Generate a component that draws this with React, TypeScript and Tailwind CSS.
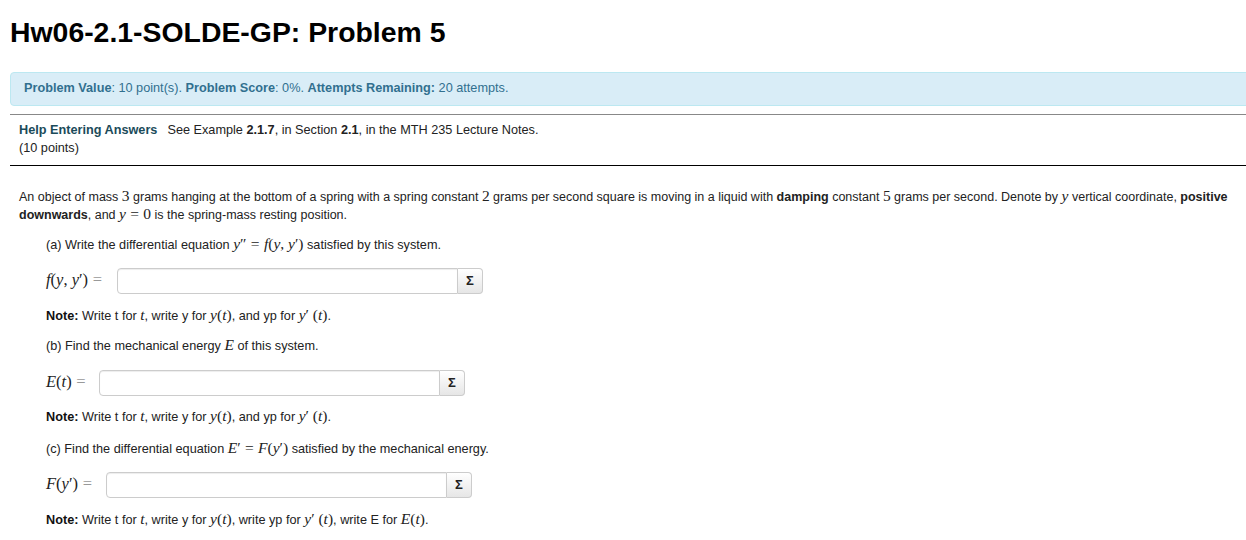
import React from "react";

const MATH = "font-['Liberation_Serif','DejaVu_Serif',serif]";

function M({ children, size = "text-[15.5px]" }: { children: React.ReactNode; size?: string }) {
  return <span className={`${MATH} ${size} not-italic leading-[0]`}>{children}</span>;
}

function I({ children }: { children: React.ReactNode }) {
  return <i className="italic">{children}</i>;
}

function Eq({ gray }: { gray?: boolean }) {
  return <span className={`mx-[0.28em] ${gray ? "text-[#999]" : ""}`}>=</span>;
}

function AnswerRow({ label, mt, w }: { label: React.ReactNode; mt: string; w: string }) {
  return (
    <div className={`flex h-[26px] items-center ${mt}`}>
      <div className={`shrink-0 whitespace-nowrap leading-[26px] ${w}`}>{label}</div>
      <input className="h-[26px] w-[341px] rounded-l-[4px] border border-[#cccccc] bg-white px-2 text-[12px] shadow-[inset_0_1px_1px_rgba(0,0,0,0.075)] outline-none" />
      <button className="flex h-[26px] w-[25px] items-center justify-center rounded-r-[4px] border border-l-0 border-[#cccccc] bg-gradient-to-b from-[#ffffff] to-[#e6e6e6] text-[13px] font-bold text-[#222]">
        Σ
      </button>
    </div>
  );
}

function Note({ children, mt }: { children: React.ReactNode; mt: string }) {
  return (
    <div className={`h-[18px] leading-[18px] ${mt}`}>
      <b className="text-[#111]">Note:</b> {children}
    </div>
  );
}

export default function App() {
  const yt = (
    <M>
      <I>y</I>(<I>t</I>)
    </M>
  );
  const ypt = (
    <M>
      <I>y</I>′ (<I>t</I>)
    </M>
  );
  const t = (
    <M>
      <I>t</I>
    </M>
  );

  return (
    <div className="min-h-[540px] overflow-hidden bg-white pl-[10px] font-['Liberation_Sans',Arial,sans-serif] text-[12.7px] text-[#333]">
      <h1 className="pt-[17px] text-[28.4px] font-bold leading-[30px] text-black">Hw06-2.1-SOLDE-GP: Problem 5</h1>

      <div className="-mr-[20px] mt-[25px] flex h-[34px] items-center rounded-l-[4px] border border-[#bce8f1] bg-[#d9edf7] pl-[13px] text-[#31708f]">
        <span>
          <b>Problem Value</b>: 10 point(s). <b>Problem Score</b>: 0%. <b>Attempts Remaining:</b> 20 attempts.
        </span>
      </div>

      <div className="mt-[8px] border-t border-[#888]" />

      <div className="px-[9px] pt-[6px] pb-[8px] leading-[18px]">
        <div>
          <b className="text-[#1b4b5a]">Help Entering Answers</b>
          <span className="ml-[10px] text-[#222]">
            See Example <b>2.1.7</b>, in Section <b>2.1</b>, in the MTH 235 Lecture Notes.
          </span>
        </div>
        <div className="text-[#222]">(10 points)</div>
      </div>

      <div className="border-t-[1.5px] border-black" />

      <div className="pl-[9px] pt-[22px] leading-[18px] text-[#222]">
        <p className="text-[12.5px]">
          An object of mass <M>3</M> grams hanging at the bottom of a spring with a spring constant <M>2</M> grams per
          second square is moving in a liquid with <b>damping</b> constant <M>5</M> grams per second. Denote by{" "}
          <M>
            <I>y</I>
          </M>{" "}
          vertical coordinate, <b>positive downwards</b>, and{" "}
          <M>
            <I>y</I>
            <Eq />0
          </M>{" "}
          is the spring-mass resting position.
        </p>

        <div className="pl-[27px]">
          <div className="mt-[12px] h-[18px] leading-[18px]">
            (a) Write the differential equation{" "}
            <M>
              <I>y</I>″<Eq />
              <I>f</I>(<I>y</I>, <I>y</I>′)
            </M>{" "}
            satisfied by this system.
          </div>
          <AnswerRow
            mt="mt-[14px]"
            w="w-[71px]"
            label={
              <M size="text-[16.5px]">
                <I>f</I>(<I>y</I>, <I>y</I>′)
                <Eq gray />
              </M>
            }
          />
          <Note mt="mt-[13px]">
            Write t for {t}, write y for {yt}, and yp for {ypt}.
          </Note>

          <div className="mt-[12px] h-[18px] leading-[18px]">
            (b) Find the mechanical energy{" "}
            <M>
              <I>E</I>
            </M>{" "}
            of this system.
          </div>
          <AnswerRow
            mt="mt-[15px]"
            w="w-[53px]"
            label={
              <M size="text-[16.5px]">
                <I>E</I>(<I>t</I>)
                <Eq gray />
              </M>
            }
          />
          <Note mt="mt-[12px]">
            Write t for {t}, write y for {yt}, and yp for {ypt}.
          </Note>

          <div className="mt-[14px] h-[18px] leading-[18px]">
            (c) Find the differential equation{" "}
            <M>
              <I>E</I>′<Eq />
              <I>F</I>(<I>y</I>′)
            </M>{" "}
            satisfied by the mechanical energy.
          </div>
          <AnswerRow
            mt="mt-[14px]"
            w="w-[60px]"
            label={
              <M size="text-[16.5px]">
                <I>F</I>(<I>y</I>′)
                <Eq gray />
              </M>
            }
          />
          <Note mt="mt-[13px]">
            Write t for {t}, write y for {yt}, write yp for {ypt}, write E for{" "}
            <M>
              <I>E</I>(<I>t</I>)
            </M>
            .
          </Note>
        </div>
      </div>
    </div>
  );
}
